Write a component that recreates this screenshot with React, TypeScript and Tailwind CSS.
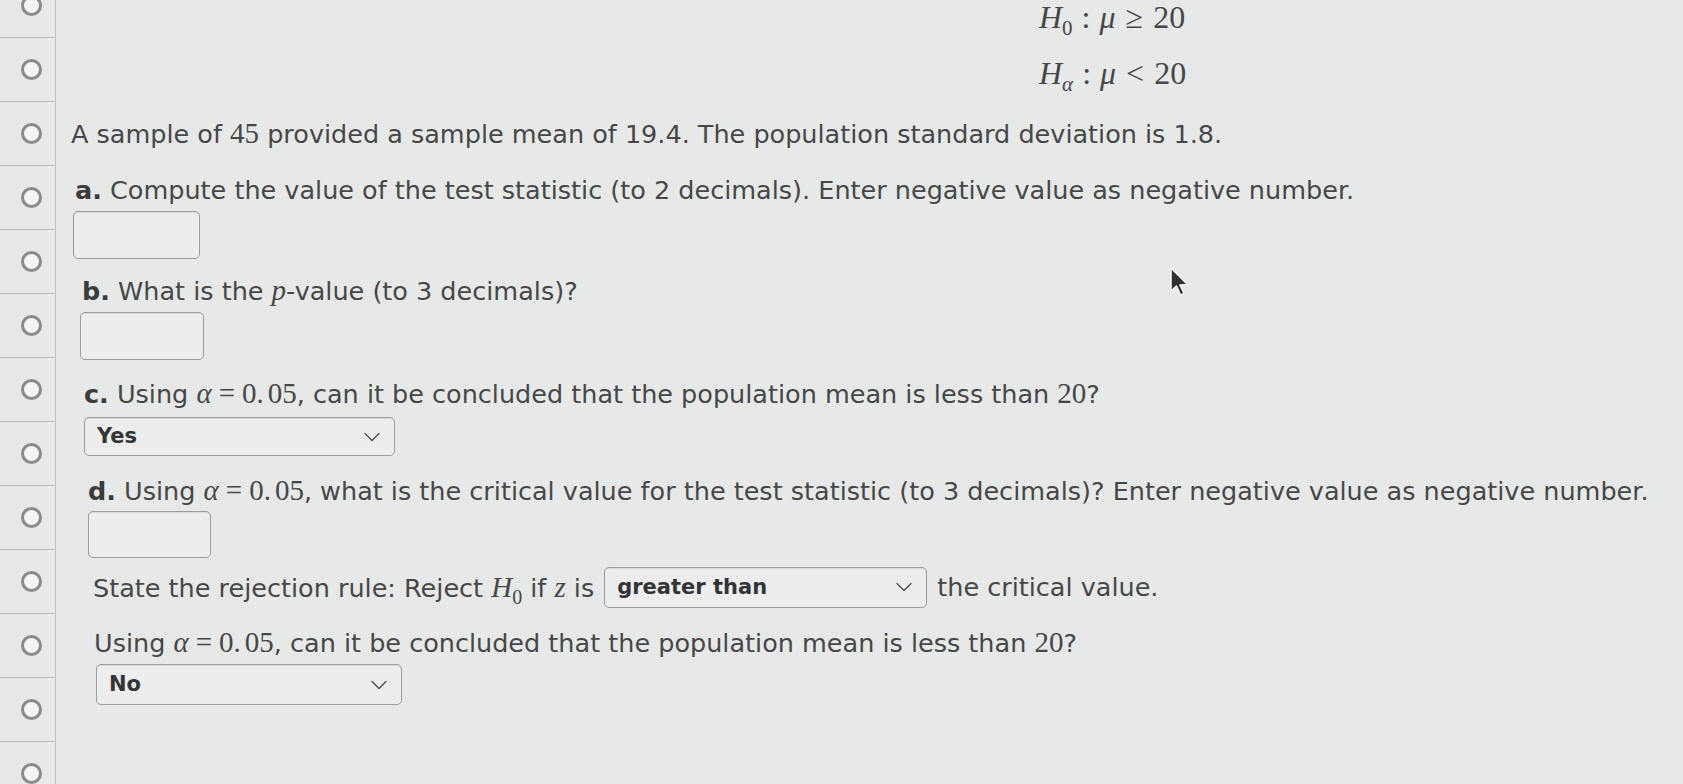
import { ChevronDown } from 'lucide-react';
import type { ReactNode } from 'react';

const SANS = "font-['DejaVu_Sans',sans-serif]";
const MATH = "font-['Liberation_Serif',serif] text-[29px]";
const HYP = "font-['Liberation_Serif',serif] text-[32px] leading-[34px] h-[34px] text-[#464747] whitespace-nowrap ml-[968px]";
const LINE = 'text-[25.5px] leading-[30px] text-[#464747] whitespace-nowrap';
const BOX = 'border-[1.5px] border-[#9b9c9c] rounded-[5px] bg-[#ecedec] shadow-[inset_0_1px_1px_rgba(0,0,0,0.08)]';

function M({ children, i }: { children: ReactNode; i?: boolean }) {
  return <span className={`${MATH} ${i ? 'italic' : ''}`}>{children}</span>;
}

function Alpha() {
  return (
    <>
      <M i>α</M>
      <M><span className="mx-[7px]">=</span>0.</M>
      <M><span className="ml-[4px]">05</span></M>
    </>
  );
}

function Select({ value, w, h }: { value: string; w: string; h: string }) {
  return (
    <div className={`${BOX} ${w} ${h} flex items-center justify-between pl-[12px] pr-[8px]`}>
      <span className="text-[21px] font-bold text-[#333435]">{value}</span>
      <ChevronDown size={28} strokeWidth={1.1} className="text-[#4a4a4a]" />
    </div>
  );
}

function Gutter() {
  return (
    <div className="w-[56px] shrink-0 border-r-[1.5px] border-[#bfc0bf] flex flex-col -mt-[26px]">
      {Array.from({ length: 13 }).map((_, i) => (
        <div key={i} className="h-[64px] shrink-0 border-b-[1.5px] border-[#b9bab9] flex items-center justify-center pl-[8px]">
          <div className="w-[21px] h-[21px] rounded-full border-[3px] border-[#8a8b8b] bg-[#f3f4f3]" />
        </div>
      ))}
    </div>
  );
}

export default function App() {
  return (
    <div className={`relative w-[1683px] h-[784px] overflow-hidden bg-[#e7e9e8] flex ${SANS}`}>
      <Gutter />

      <div className="flex-1 flex flex-col pl-[15px]">
        {/* hypotheses */}
        <div className={HYP}>
          <i>H</i><sub className="text-[21px] align-[-2px]">0</sub><span className="mx-[9px]">:</span><i>μ</i><span className="mx-[10px]">≥</span>20
        </div>
        <div className={`${HYP} mt-[22px]`}>
          <i>H</i><sub className="text-[21px] italic align-[-2px]">α</sub><span className="mx-[9px]">:</span><i>μ</i><span className="mx-[10px]">&lt;</span>20
        </div>

        <p className={`${LINE} mt-[28px]`}>
          A sample of <M>45</M> provided a sample mean of 19.4. The population standard deviation is 1.8.
        </p>

        <p className={`${LINE} mt-[26px] ml-[4px]`}>
          <b className="text-[#3a3b3b]">a.</b> Compute the value of the test statistic (to 2 decimals). Enter negative value as negative number.
        </p>
        <div className={`${BOX} w-[127px] h-[48px] mt-[6px] ml-[2px]`} />

        <p className={`${LINE} mt-[16px] ml-[11px]`}>
          <b className="text-[#3a3b3b]">b.</b> What is the <M i>p</M>-value (to 3 decimals)?
        </p>
        <div className={`${BOX} w-[124px] h-[48px] mt-[6px] ml-[9px]`} />

        <p className={`${LINE} mt-[18px] ml-[13px]`}>
          <b className="text-[#3a3b3b]">c.</b> Using <Alpha />, can it be concluded that the population mean is less than <M>20</M>?
        </p>
        <div className="mt-[8px] ml-[13px]">
          <Select value="Yes" w="w-[311px]" h="h-[39px]" />
        </div>

        <p className={`${LINE} mt-[19px] ml-[17px]`}>
          <b className="text-[#3a3b3b]">d.</b> Using <Alpha />, what is the critical value for the test statistic (to 3 decimals)? Enter negative value as negative number.
        </p>
        <div className={`${BOX} w-[123px] h-[47px] mt-[5px] ml-[17px]`} />

        <div className={`${LINE} mt-[8px] ml-[22px] flex items-center gap-[10px] h-[42px]`}>
          <span>
            State the rejection rule: Reject <M i>H</M><M><sub className="text-[20px] align-[-2px]">0</sub></M> if <M i>z</M> is
          </span>
          <Select value="greater than" w="w-[323px]" h="h-[41px]" />
          <span>the critical value.</span>
        </div>

        <p className={`${LINE} mt-[19px] ml-[23px]`}>
          Using <Alpha />, can it be concluded that the population mean is less than <M>20</M>?
        </p>
        <div className="mt-[6px] ml-[25px]">
          <Select value="No" w="w-[306px]" h="h-[41px]" />
        </div>
      </div>

      {/* mouse pointer over the page */}
      <svg className="absolute left-[1168px] top-[266px]" width="24" height="34" viewBox="0 0 24 34">
        <path d="M3 2 L3 25 L8.5 20 L12.5 29 L16 27.5 L12 19 L19.5 18.5 Z" fill="#2f3030" stroke="#f4f4f4" strokeWidth="1.6" strokeLinejoin="round" />
      </svg>
    </div>
  );
}
